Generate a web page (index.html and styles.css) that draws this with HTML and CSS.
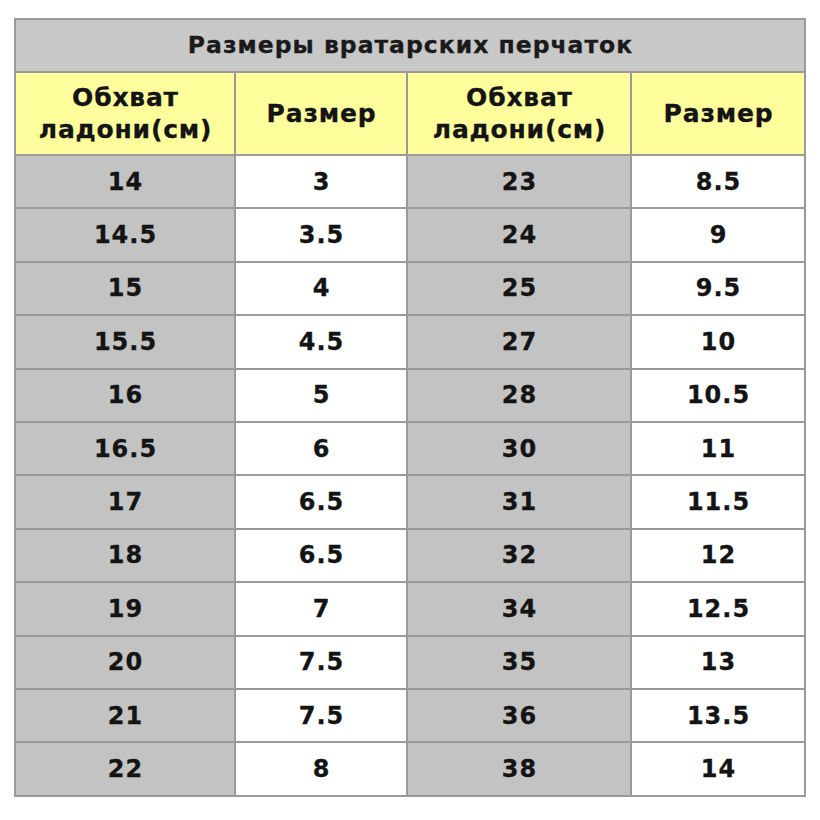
FILE: index.html
```html
<!DOCTYPE html>
<html lang="ru">
<head>
<meta charset="utf-8">
<title>Размеры вратарских перчаток</title>
<link rel="stylesheet" href="styles.css">
</head>
<body>
<div class="page">
<table class="sizes">
<colgroup><col class="c1"><col class="c2"><col class="c3"><col class="c4"></colgroup>
<thead>
<tr class="title"><th colspan="4">Размеры вратарских перчаток</th></tr>
<tr class="head"><th>Обхват<br>ладони(см)</th><th>Размер</th><th>Обхват<br>ладони(см)</th><th>Размер</th></tr>
</thead>
<tbody>
<tr><td class="g">14</td><td>3</td><td class="g">23</td><td>8.5</td></tr>
<tr><td class="g">14.5</td><td>3.5</td><td class="g">24</td><td>9</td></tr>
<tr><td class="g">15</td><td>4</td><td class="g">25</td><td>9.5</td></tr>
<tr><td class="g">15.5</td><td>4.5</td><td class="g">27</td><td>10</td></tr>
<tr><td class="g">16</td><td>5</td><td class="g">28</td><td>10.5</td></tr>
<tr><td class="g">16.5</td><td>6</td><td class="g">30</td><td>11</td></tr>
<tr><td class="g">17</td><td>6.5</td><td class="g">31</td><td>11.5</td></tr>
<tr><td class="g">18</td><td>6.5</td><td class="g">32</td><td>12</td></tr>
<tr><td class="g">19</td><td>7</td><td class="g">34</td><td>12.5</td></tr>
<tr><td class="g">20</td><td>7.5</td><td class="g">35</td><td>13</td></tr>
<tr><td class="g">21</td><td>7.5</td><td class="g">36</td><td>13.5</td></tr>
<tr><td class="g">22</td><td>8</td><td class="g">38</td><td>14</td></tr>
</tbody>
</table>
</div>
</body>
</html>
```

FILE: styles.css
```css
html, body {
  margin: 0;
  padding: 0;
  background: #ffffff;
}
.page {
  padding: 18px 0 0 14px;
}
.sizes {
  width: 790px;
  table-layout: fixed;
  border-collapse: collapse;
  font-family: "DejaVu Sans", Verdana, sans-serif;
  font-weight: bold;
  color: #141414;
  border: 2px solid #9a9a9a;
}
.c1 { width: 220px; }
.c2 { width: 172px; }
.c3 { width: 224px; }
.c4 { width: 174px; }
.sizes th, .sizes td {
  border: 2px solid #9a9a9a;
  text-align: center;
  vertical-align: middle;
  padding: 0;
  -webkit-text-stroke: 0.3px currentColor;
}
.title th {
  height: 49px;
  background: #c8c8c8;
  font-size: 23.5px;
  letter-spacing: 1px;
  padding: 0 0 2px 1px;
  color: #1a1a1a;
}
.head th {
  height: 81px;
  background: #fefe9c;
  font-size: 25px;
  line-height: 32px;
  letter-spacing: 0.8px;
  padding-left: 1px;
}
.sizes td {
  height: 51.4px;
  font-size: 24px;
  letter-spacing: 1px;
  padding-left: 1px;
  background: #ffffff;
}
.sizes td.g {
  background: #c3c3c3;
}
```
